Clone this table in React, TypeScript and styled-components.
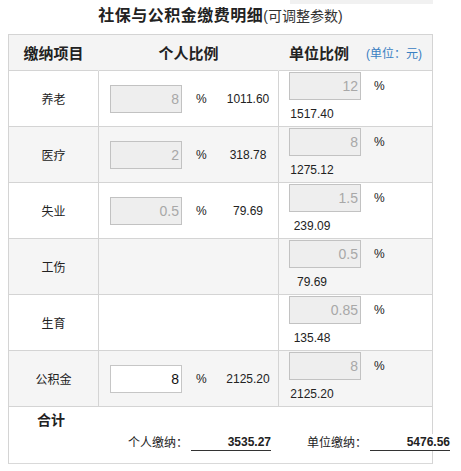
import React from "react";
import styled, { createGlobalStyle } from "styled-components";

const GlobalStyle = createGlobalStyle`
  html, body {
    margin: 0;
    padding: 0;
    background: #ffffff;
  }
  body {
    font-family: "Liberation Sans", Arial, "Noto Sans CJK SC", sans-serif;
    color: #222222;
  }
`;

const Page = styled.div`
  padding: 0 8px;
  width: 425px;
`;

const TopStrip = styled.div`
  margin-left: 282px;
  width: 143px;
  height: 4px;
  background: #f1f1f1;
`;

const Title = styled.div`
  height: 24px;
  line-height: 24px;
  text-align: center;
  font-size: 16px;
  font-weight: bold;
  letter-spacing: 0.5px;
  color: #222;
  margin-bottom: 6px;
`;

const TitleNote = styled.span`
  font-size: 14px;
  font-weight: normal;
  letter-spacing: 0;
  color: #333;
`;

const Table = styled.div`
  display: grid;
  grid-template-columns: 90px 180px 153px;
  grid-auto-rows: 56px;
  grid-template-rows: 36px;
  border: 1px solid #d4d4d4;
  border-bottom-color: #d9d9d9;
  width: 425px;
  box-sizing: border-box;
`;

const HeaderCell = styled.div<{ $last?: boolean }>`
  display: flex;
  align-items: center;
  justify-content: center;
  background: #f4f4f4;
  border-bottom: 1px solid #d4d4d4;
  border-right: ${(p) => (p.$last ? "none" : "1px solid #f4f4f4")};
  box-sizing: border-box;
  font-size: 15px;
  font-weight: bold;
  color: #222;
`;

const UnitNote = styled.span`
  margin-left: 17px;
  font-size: 12px;
  font-weight: normal;
  color: #3a80c2;
`;

const Cell = styled.div<{ $shade: boolean; $last?: boolean }>`
  background: ${(p) => (p.$shade ? "#f5f5f5" : "#ffffff")};
  border-bottom: 1px solid #d4d4d4;
  border-right: ${(p) => (p.$last ? "none" : "1px solid #d4d4d4")};
  box-sizing: border-box;
`;

const LabelCell = styled(Cell)`
  display: flex;
  align-items: center;
  justify-content: center;
  font-size: 12px;
  color: #222;
`;

const PersonalCell = styled(Cell)`
  display: flex;
  align-items: center;
  padding-left: 11px;
  font-size: 12px;
`;

const CompanyCell = styled(Cell)`
  padding: 1px 0 0 10px;
  font-size: 12px;
`;

const CompanyTop = styled.div`
  display: flex;
  align-items: center;
`;

const RateInput = styled.input<{ $editable?: boolean }>`
  width: 72px;
  height: 28px;
  box-sizing: border-box;
  margin: 0;
  padding: 0 2px 0 0;
  border: 1px solid ${(p) => (p.$editable ? "#c6c6c6" : "#c2c2c2")};
  background: ${(p) => (p.$editable ? "#ffffff" : "#eeeeee")};
  color: ${(p) => (p.$editable ? "#111111" : "#a8a8a8")};
  -webkit-text-fill-color: ${(p) => (p.$editable ? "#111111" : "#a8a8a8")};
  opacity: 1;
  font-family: "Liberation Sans", Arial, sans-serif;
  font-size: 14px;
  text-align: right;
  outline: none;
`;

const Percent = styled.span<{ $gap: number }>`
  display: inline-block;
  margin-left: ${(p) => p.$gap}px;
  width: 11px;
  font-size: 12px;
  color: #222;
`;

const Amount = styled.span`
  display: inline-block;
  margin-left: 16px;
  width: 50px;
  text-align: center;
  font-size: 12px;
  color: #222;
`;

const CompanyAmount = styled.div`
  margin-top: 7px;
  width: 46px;
  line-height: 14px;
  text-align: center;
  font-size: 12px;
  color: #222;
`;

const TotalsRow = styled.div`
  grid-column: 1 / -1;
  padding-top: 4px;
  min-width: 0;
`;

const TotalsTitle = styled.div`
  padding-left: 28px;
  font-size: 14px;
  font-weight: bold;
  line-height: 18px;
  color: #222;
`;

const TotalsLine = styled.div`
  display: flex;
  align-items: flex-end;
  margin-top: 5px;
  padding-left: 119px;
  white-space: nowrap;
  width: max-content;
`;

const TotalsLabel = styled.span<{ $gap?: number }>`
  flex-shrink: 0;
  margin-left: ${(p) => p.$gap ?? 0}px;
  font-size: 12px;
  line-height: 16px;
  color: #222;
`;

const TotalsValue = styled.span`
  flex-shrink: 0;
  display: inline-block;
  margin-left: 3px;
  width: 80px;
  border-bottom: 1px solid #333333;
  background: #ffffff;
  text-align: right;
  font-size: 12px;
  font-weight: bold;
  line-height: 16px;
  color: #222;
`;

type Row = {
  name: string;
  p?: string;
  pAmt?: string;
  pEditable?: boolean;
  c: string;
  cAmt: string;
};

const rows: Row[] = [
  { name: "养老", p: "8", pAmt: "1011.60", c: "12", cAmt: "1517.40" },
  { name: "医疗", p: "2", pAmt: "318.78", c: "8", cAmt: "1275.12" },
  { name: "失业", p: "0.5", pAmt: "79.69", c: "1.5", cAmt: "239.09" },
  { name: "工伤", c: "0.5", cAmt: "79.69" },
  { name: "生育", c: "0.85", cAmt: "135.48" },
  { name: "公积金", p: "8", pAmt: "2125.20", pEditable: true, c: "8", cAmt: "2125.20" },
];

export default function App() {
  return (
    <>
      <GlobalStyle />
      <Page>
        <TopStrip />
        <Title>
          社保与公积金缴费明细<TitleNote>(可调整参数)</TitleNote>
        </Title>
        <Table>
          <HeaderCell>缴纳项目</HeaderCell>
          <HeaderCell>个人比例</HeaderCell>
          <HeaderCell $last>
            单位比例<UnitNote>(单位：元)</UnitNote>
          </HeaderCell>
          {rows.map((r, i) => {
            const shade = i % 2 === 1;
            return (
              <React.Fragment key={r.name}>
                <LabelCell $shade={shade}>{r.name}</LabelCell>
                <PersonalCell $shade={shade}>
                  {r.p !== undefined && (
                    <>
                      {r.pEditable ? (
                        <RateInput $editable defaultValue={r.p} />
                      ) : (
                        <RateInput value={r.p} disabled readOnly />
                      )}
                      <Percent $gap={14}>%</Percent>
                      <Amount>{r.pAmt}</Amount>
                    </>
                  )}
                </PersonalCell>
                <CompanyCell $shade={shade} $last>
                  <CompanyTop>
                    <RateInput value={r.c} disabled readOnly />
                    <Percent $gap={13}>%</Percent>
                  </CompanyTop>
                  <CompanyAmount>{r.cAmt}</CompanyAmount>
                </CompanyCell>
              </React.Fragment>
            );
          })}
          <TotalsRow>
            <TotalsTitle>合计</TotalsTitle>
            <TotalsLine>
              <TotalsLabel>个人缴纳：</TotalsLabel>
              <TotalsValue>3535.27</TotalsValue>
              <TotalsLabel $gap={36}>单位缴纳：</TotalsLabel>
              <TotalsValue>5476.56</TotalsValue>
            </TotalsLine>
          </TotalsRow>
        </Table>
      </Page>
    </>
  );
}
